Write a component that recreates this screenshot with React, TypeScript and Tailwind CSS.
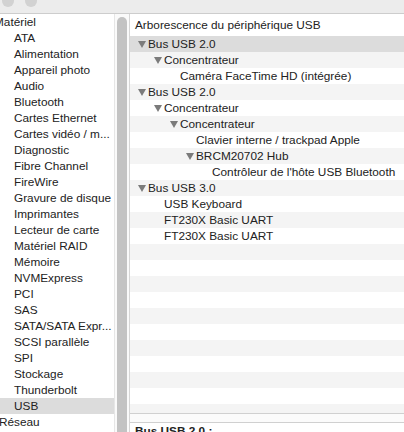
const sidebarItems = [
	"ATA",
	"Alimentation",
	"Appareil photo",
	"Audio",
	"Bluetooth",
	"Cartes Ethernet",
	"Cartes vidéo / m...",
	"Diagnostic",
	"Fibre Channel",
	"FireWire",
	"Gravure de disque",
	"Imprimantes",
	"Lecteur de carte",
	"Matériel RAID",
	"Mémoire",
	"NVMExpress",
	"PCI",
	"SAS",
	"SATA/SATA Expr...",
	"SCSI parallèle",
	"SPI",
	"Stockage",
	"Thunderbolt",
	"USB",
]

type TreeRow = {
	label: string
	level: number
	open?: boolean
}

const treeRows: TreeRow[] = [
	{ label: "Bus USB 2.0", level: 0, open: true },
	{ label: "Concentrateur", level: 1, open: true },
	{ label: "Caméra FaceTime HD (intégrée)", level: 2 },
	{ label: "Bus USB 2.0", level: 0, open: true },
	{ label: "Concentrateur", level: 1, open: true },
	{ label: "Concentrateur", level: 2, open: true },
	{ label: "Clavier interne / trackpad Apple", level: 3 },
	{ label: "BRCM20702 Hub", level: 3, open: true },
	{ label: "Contrôleur de l'hôte USB Bluetooth", level: 4 },
	{ label: "Bus USB 3.0", level: 0, open: true },
	{ label: "USB Keyboard", level: 1 },
	{ label: "FT230X Basic UART", level: 1 },
	{ label: "FT230X Basic UART", level: 1 },
]

const emptyRows = Array.from({ length: 12 }, (_, i) => i)

function Triangle() {
	return (
		<svg width="8" height="7" viewBox="0 0 8 7" className="absolute left-[-10px] top-[5px]">
			<path d="M0 0 L8 0 L4 7 Z" fill="#7b7b7b" />
		</svg>
	)
}

function rowBg(index: number) {
	if (index === 0) return "bg-[#dcdcdc]"
	return index % 2 === 1 ? "bg-[#f4f4f4]" : "bg-white"
}

export default function App() {
	return (
		<div
			className="w-[404px] h-[432px] overflow-hidden bg-white flex flex-col text-[11.8px] text-[#222]"
			style={{ fontFamily: '"Liberation Sans", Arial, sans-serif' }}
		>
			<div className="h-[14px] shrink-0 bg-[#ececec] border-b border-[#cdcdcd] flex gap-[11px] pl-[2px] overflow-hidden">
				<div className="w-[12px] h-[12px] rounded-full bg-[#d2d2d2] mt-[-5px] shrink-0" />
				<div className="w-[12px] h-[12px] rounded-full bg-[#d2d2d2] mt-[-5px] shrink-0" />
			</div>

			<div className="flex flex-1 min-h-0">
				<div className="w-[114px] shrink-0 overflow-hidden">
					<div className="h-[16px] leading-[16px] ml-[-6px] whitespace-nowrap">Matériel</div>
					{sidebarItems.map((item) => (
						<div
							key={item}
							className={`h-[16px] leading-[16px] pl-[14px] whitespace-nowrap ${item === "USB" ? "bg-[#dcdcdc]" : ""}`}
						>
							{item}
						</div>
					))}
					<div className="h-[16px] leading-[16px] ml-[-1px] whitespace-nowrap">Réseau</div>
				</div>

				<div className="w-[15px] shrink-0 bg-[#fafafa] border-l border-[#e6e6e6] pt-[3px] pl-[2px]">
					<div className="w-[10px] h-full rounded-t-full bg-[#c3c3c3]" />
				</div>
				<div className="w-px shrink-0 bg-[#d6d6d6]" />

				<div className="flex-1 min-w-0 flex flex-col">
					<div className="h-[22px] shrink-0 leading-[22px] pl-[5px] whitespace-nowrap">
						Arborescence du périphérique USB
					</div>
					<div className="h-[377px] shrink-0 overflow-hidden">
						{treeRows.map((row, i) => (
							<div key={i} className={`h-[16px] leading-[16px] whitespace-nowrap ${rowBg(i)}`}>
								<span className="relative inline-block" style={{ marginLeft: 18 + row.level * 16 }}>
									{row.open ? <Triangle /> : null}
									{row.label}
								</span>
							</div>
						))}
						{emptyRows.map((n) => (
							<div key={n} className={`h-[16px] ${rowBg(treeRows.length + n)}`} />
						))}
					</div>
					<div className="h-[10px] shrink-0 border-y border-[#d0d0d0] bg-[#fbfbfb]" />
					<div className="pl-[5px] pt-[1px] font-bold leading-[14px] whitespace-nowrap">Bus USB 2.0 :</div>
				</div>
			</div>
		</div>
	)
}
